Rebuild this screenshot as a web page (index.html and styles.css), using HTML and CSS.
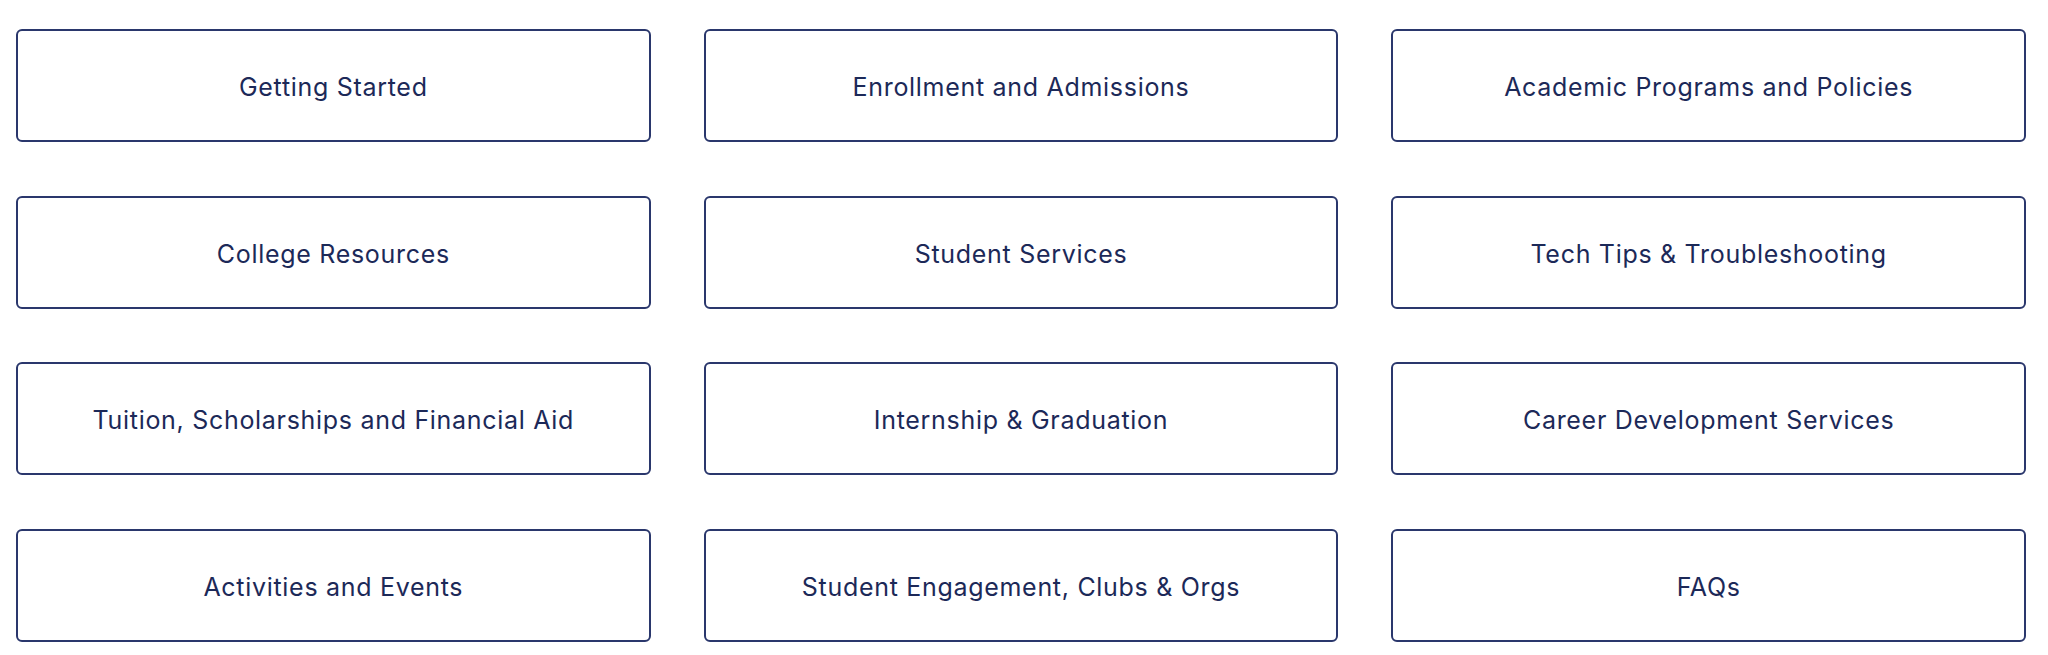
FILE: index.html
```html
<!DOCTYPE html>
<html lang="en">
<head>
<meta charset="utf-8">
<title>Topics</title>
<link rel="stylesheet" href="styles.css">
</head>
<body>
<main class="topics">
  <a class="topic" href="#">Getting Started</a>
  <a class="topic" href="#">Enrollment and Admissions</a>
  <a class="topic" href="#">Academic Programs and Policies</a>
  <a class="topic" href="#">College Resources</a>
  <a class="topic" href="#">Student Services</a>
  <a class="topic" href="#">Tech Tips &amp; Troubleshooting</a>
  <a class="topic" href="#">Tuition, Scholarships and Financial Aid</a>
  <a class="topic" href="#">Internship &amp; Graduation</a>
  <a class="topic" href="#">Career Development Services</a>
  <a class="topic" href="#">Activities and Events</a>
  <a class="topic" href="#">Student Engagement, Clubs &amp; Orgs</a>
  <a class="topic" href="#">FAQs</a>
</main>
</body>
</html>
```
FILE: styles.css
```css
html, body {
  margin: 0;
  padding: 0;
  background: #ffffff;
}
body {
  font-family: Inter, "Noto Sans", "Liberation Sans", sans-serif;
}
.topics {
  display: grid;
  grid-template-columns: repeat(3, 1fr);
  grid-auto-rows: 113px;
  column-gap: 53px;
  row-gap: 53.5px;
  padding: 29px 22px 0 16px;
}
.topic {
  display: flex;
  align-items: center;
  justify-content: center;
  padding-top: 3px;
  border: 2px solid #2a376c;
  border-radius: 6px;
  color: #1c2958;
  font-size: 25px;
  letter-spacing: 0.7px;
  text-decoration: none;
  text-align: center;
}
```
